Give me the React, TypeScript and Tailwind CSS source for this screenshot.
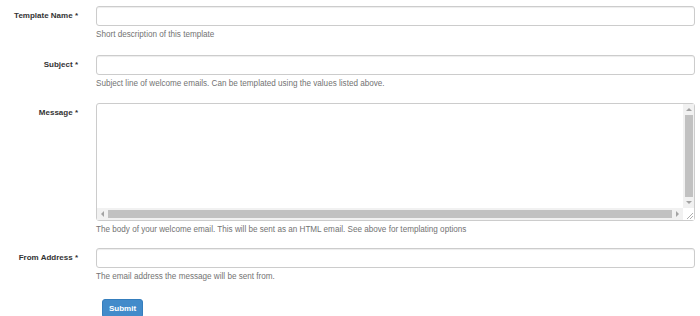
import React from 'react';

const font = { fontFamily: '"Liberation Sans", Arial, sans-serif' };

function Label({ children }: { children: React.ReactNode }) {
  return (
    <div className="w-[79px] shrink-0 pr-[1px] pt-[5px] text-right text-[8px] font-bold leading-[10px] text-[#333]">
      {children} <span>*</span>
    </div>
  );
}

function Help({ children }: { children: React.ReactNode }) {
  return <p className="mt-[4px] text-[8.15px] leading-[10px] text-[#737373]">{children}</p>;
}

function TextInput() {
  return (
    <input
      type="text"
      className="block h-[20px] w-full rounded-[3px] border border-[#ccc] bg-white px-[6px] text-[8.5px] shadow-[inset_0_1px_1px_rgba(0,0,0,0.075)] outline-none"
    />
  );
}

// textarea drawn with the old-style always-visible scrollbars
function MessageBox() {
  return (
    <div className="flex h-[118px] w-full flex-col rounded-[3px] border border-[#ccc] bg-white">
      <div className="flex min-h-0 flex-1">
        <div className="flex-1" />
        <div className="flex w-[11px] flex-col items-center bg-[#f1f1f1]">
          <div className="flex h-[11px] items-center justify-center">
            <div className="h-0 w-0 border-x-[3px] border-b-[3px] border-x-transparent border-b-[#a3a3a3]" />
          </div>
          <div className="w-[8px] flex-1 bg-[#c1c1c1]" />
          <div className="flex h-[11px] items-center justify-center">
            <div className="h-0 w-0 border-x-[3px] border-t-[3px] border-x-transparent border-t-[#a3a3a3]" />
          </div>
        </div>
      </div>
      <div className="flex h-[12px]">
        <div className="flex flex-1 items-center bg-[#f1f1f1]">
          <div className="flex w-[11px] justify-center">
            <div className="h-0 w-0 border-y-[3px] border-r-[3px] border-y-transparent border-r-[#a3a3a3]" />
          </div>
          <div className="h-[8px] flex-1 bg-[#c1c1c1]" />
          <div className="flex w-[11px] justify-center">
            <div className="h-0 w-0 border-y-[3px] border-l-[3px] border-y-transparent border-l-[#a3a3a3]" />
          </div>
        </div>
        <div className="flex w-[11px] items-end justify-end bg-white">
          <svg width="10" height="10" viewBox="0 0 10 10">
            <path d="M9 3 L3 9 M9 6 L6 9" stroke="#999" strokeWidth="0.8" />
          </svg>
        </div>
      </div>
    </div>
  );
}

export default function App() {
  return (
    <div className="min-h-[316px] w-[700px] bg-white pt-[6px]" style={font}>
      <div className="flex">
        <Label>Template Name</Label>
        <div className="ml-[17px] w-[599px]">
          <TextInput />
          <Help>Short description of this template</Help>
        </div>
      </div>

      <div className="mt-[15px] flex">
        <Label>Subject</Label>
        <div className="ml-[17px] w-[599px]">
          <TextInput />
          <Help>Subject line of welcome emails. Can be templated using the values listed above.</Help>
        </div>
      </div>

      <div className="mt-[14px] flex">
        <Label>Message</Label>
        <div className="ml-[17px] w-[599px]">
          <MessageBox />
          <Help>
            The body of your welcome email. This will be sent as an HTML email. See above for templating options
          </Help>
        </div>
      </div>

      <div className="mt-[13px] flex">
        <Label>From Address</Label>
        <div className="ml-[17px] w-[599px]">
          <TextInput />
          <Help>The email address the message will be sent from.</Help>
        </div>
      </div>

      <div className="ml-[102px] mt-[12px]">
        <button className="h-[19px] rounded-[3px] border border-[#357ebd] bg-[#428bca] px-[6px] text-[8px] font-bold leading-[17px] text-white">
          Submit
        </button>
      </div>
    </div>
  );
}
